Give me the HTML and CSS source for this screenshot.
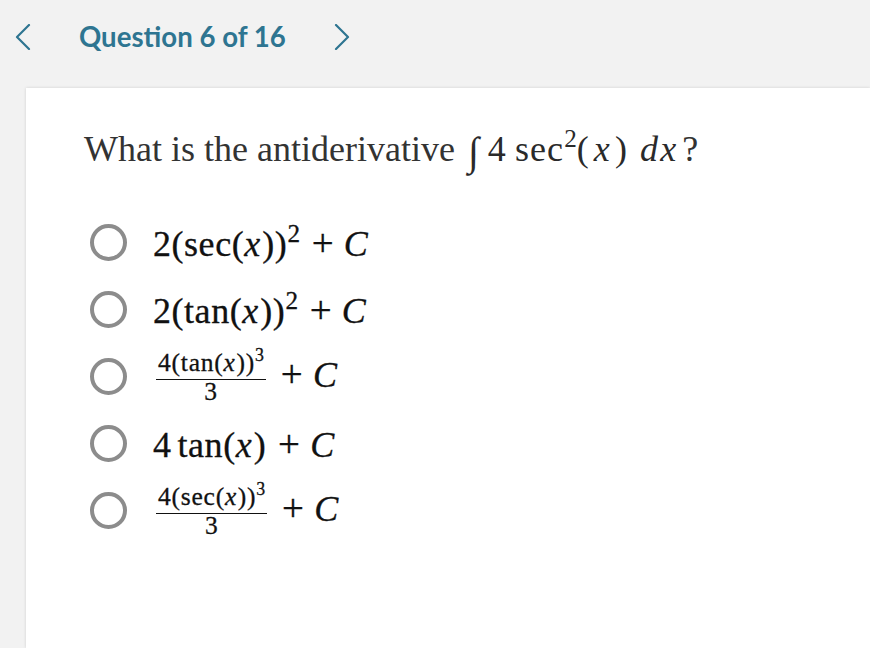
FILE: index.html
```html
<!DOCTYPE html>
<html lang="en">
<head>
<meta charset="utf-8">
<title>Question 6 of 16</title>
<link rel="stylesheet" href="styles.css">
</head>
<body>
<header class="topbar">
  <button class="nav" aria-label="Previous question">
    <svg class="chev" viewBox="0 0 16 26" width="16" height="26"><polyline points="14,1 2,13 14,25"/></svg>
  </button>
  <h1 class="qnum">Question 6 of 16</h1>
  <button class="nav" aria-label="Next question">
    <svg class="chev" viewBox="0 0 16 26" width="16" height="26"><polyline points="2,1 14,13 2,25"/></svg>
  </button>
</header>
<main class="card">
  <p class="question">What is the antiderivative <span class="qmath"><span class="int">∫</span>4<span class="thin"></span>sec<sup>2</sup>(<i class="x">x</i>)<span class="thin"></span><i class="d">d</i><i>x</i></span><span class="qmark">?</span></p>
  <ul class="options">
    <li class="option"><span class="radio"></span><span class="math">2(sec(<i>x</i>))<sup>2</sup><span class="op">+</span><i>C</i></span></li>
    <li class="option"><span class="radio"></span><span class="math">2(tan(<i>x</i>))<sup>2</sup><span class="op">+</span><i>C</i></span></li>
    <li class="option"><span class="radio"></span><span class="math"><span class="frac"><span class="fnum">4(tan(<i>x</i>))<sup>3</sup></span><span class="fden">3</span></span><span class="op">+</span><i>C</i></span></li>
    <li class="option"><span class="radio"></span><span class="math">4<span class="thin"></span>tan(<i>x</i>)<span class="op">+</span><i>C</i></span></li>
    <li class="option"><span class="radio"></span><span class="math"><span class="frac"><span class="fnum">4(sec(<i>x</i>))<sup>3</sup></span><span class="fden">3</span></span><span class="op">+</span><i>C</i></span></li>
  </ul>
</main>
</body>
</html>
```

FILE: styles.css
```css
html, body {
  margin: 0;
  padding: 0;
  background: #f2f2f2;
}
body {
  width: 870px;
  height: 648px;
  overflow: hidden;
}
.topbar {
  height: 88px;
  display: flex;
  align-items: center;
  padding: 0 0 14px 15px;
  box-sizing: border-box;
  gap: 48px;
}
.nav {
  background: none;
  border: 0;
  padding: 0;
  margin: 0;
  display: flex;
  cursor: pointer;
}
.chev polyline {
  fill: none;
  stroke: #2e7591;
  stroke-width: 2.2;
  stroke-linecap: round;
  stroke-linejoin: round;
}
.qnum {
  margin: 0;
  font-family: Lato, "Open Sans", sans-serif;
  font-weight: 700;
  font-size: 27.6px;
  color: #2e7591;
  line-height: 1;
}
.card {
  margin-left: 26px;
  background: #fff;
  height: 560px;
  box-shadow: 0 0 3px rgba(0, 0, 0, 0.14);
  padding: 38px 0 0 58px;
  box-sizing: border-box;
}
.question {
  margin: 0;
  font-family: "Liberation Serif", "Times New Roman", serif;
  font-size: 36px;
  line-height: 44px;
  color: #333;
}
.qmath {
  color: #2a2a2a;
  margin-left: 4px;
  letter-spacing: 0.03em;
}
.qmath .int {
  font-style: italic;
  display: inline-block;
  margin-right: 9px;
  font-size: 40px;
  transform: translateY(4px);
  letter-spacing: 0;
}
.qmath .thin {
  width: 8px;
}
.qmath i.x {
  padding: 0 3px 0 4px;
}
.qmath i.d {
  margin-left: 4px;
}
.qmark {
  margin-left: 4px;
}
.options {
  list-style: none;
  margin: 38px 0 0;
  padding: 0 0 0 6px;
}
.option {
  display: flex;
  align-items: center;
  height: 67px;
  gap: 26px;
}
.radio {
  width: 37px;
  height: 37px;
  box-sizing: border-box;
  border: 4px solid #8c8c8c;
  border-radius: 50%;
  flex: none;
}
.math {
  font-family: "Liberation Serif", "Times New Roman", serif;
  font-size: 36px;
  color: #111;
  letter-spacing: 0.015em;
  white-space: nowrap;
  -webkit-text-stroke: 0.3px #111;
}
.math i, .qmath i {
  letter-spacing: 0.06em;
}
sup {
  font-size: 0.7em;
  vertical-align: 0.55em;
  line-height: 0;
  letter-spacing: 0;
}
.op {
  margin: 0 0.25em 0 0.3em;
  font-size: 1.08em;
}
.thin {
  display: inline-block;
  width: 6px;
}
.frac {
  display: inline-flex;
  flex-direction: column;
  align-items: stretch;
  font-size: 25.5px;
  vertical-align: 16px;
  margin: 0 0.05em 0 0.12em;
  letter-spacing: 0.03em;
}
.fnum {
  line-height: 26px;
  padding: 0 2px 3px;
  text-align: center;
}
.fden {
  border-top: 1.5px solid #111;
  line-height: 24px;
  text-align: center;
}
.frac + .op {
  margin-left: 0.35em;
}
```
